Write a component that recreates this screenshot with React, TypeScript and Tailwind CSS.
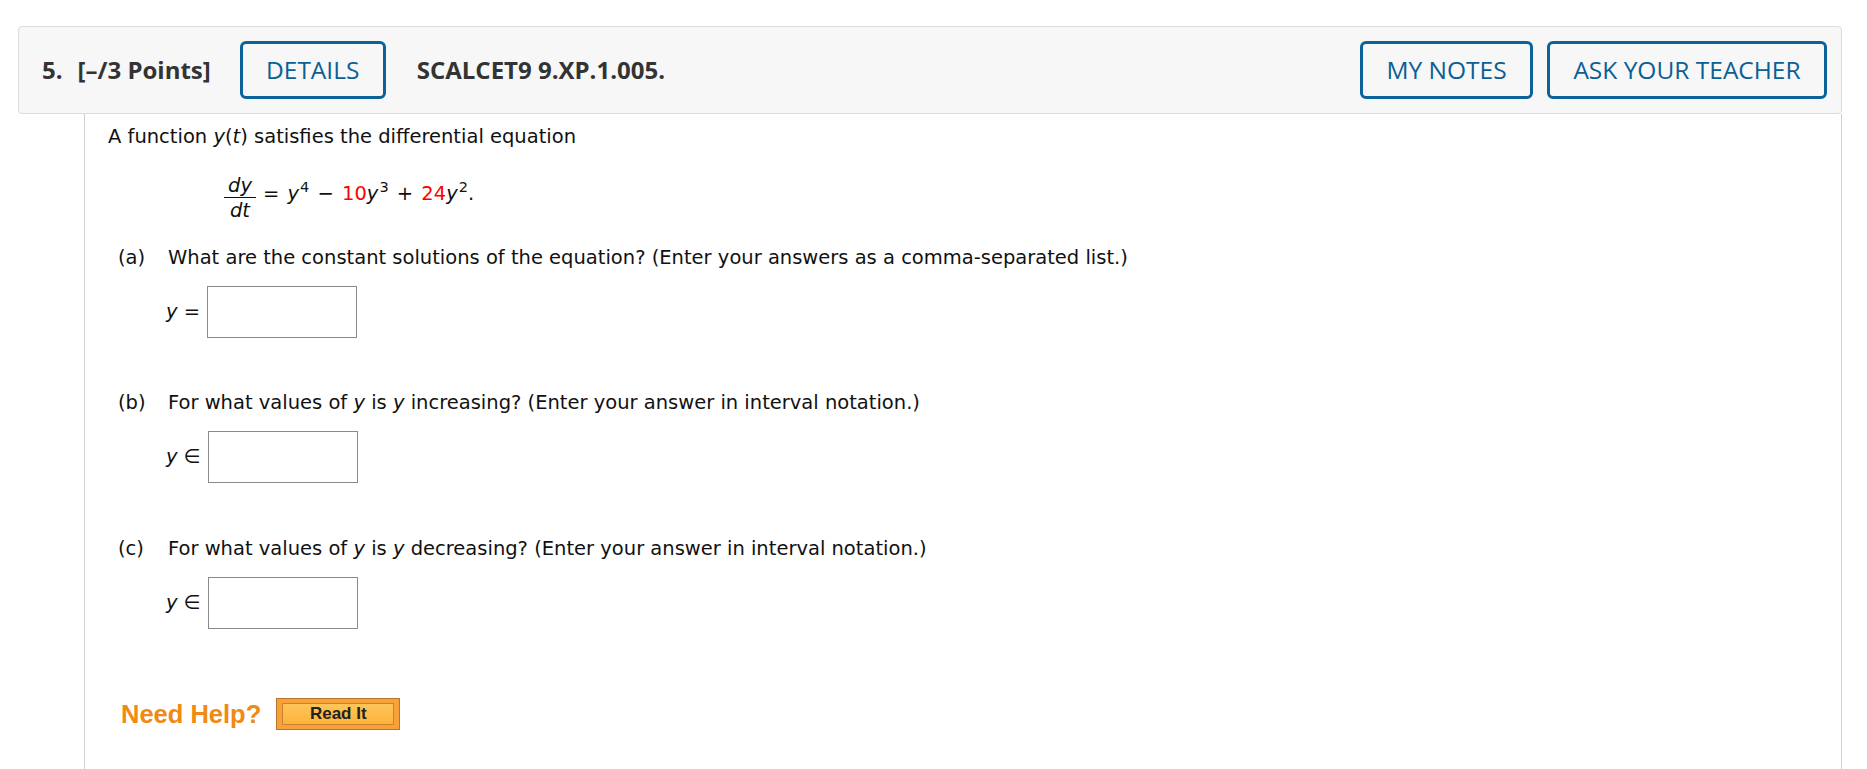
import React from "react";

function HeaderButton({ label, width }: { label: string; width: string }) {
  return (
    <button
      className={`${width} h-[58px] shrink-0 rounded-[6px] border-[3px] border-[#0b639a] bg-transparent text-[24.5px] text-[#0b5f94]`}
    >
      {label}
    </button>
  );
}

function Part({
  label,
  question,
  answerLabel,
}: {
  label: string;
  question: React.ReactNode;
  answerLabel: React.ReactNode;
}) {
  return (
    <div className="pl-[10px]">
      <div className="flex leading-[24px]">
        <span className="w-[50px] shrink-0">{label}</span>
        <span>{question}</span>
      </div>
      <div className="mt-[16px] ml-[48px] flex items-center">
        <span className="leading-[24px]">{answerLabel}</span>
        <input
          type="text"
          className="ml-[7px] h-[52px] w-[150px] border border-[#8a8a8a] bg-white outline-none"
        />
      </div>
    </div>
  );
}

export default function App() {
  const y = <i>y</i>;
  return (
    <div className="h-[769px] overflow-hidden bg-white pl-[18px] pr-[25px] pt-[26px]">
      <div className="flex h-[88px] items-center rounded-[4px] border border-[#dcdcdc] bg-[#f7f7f7] pl-[23px] pr-[14px] font-['Open_Sans',sans-serif]">
        <span className="text-[24px] font-bold text-[#333]">5.</span>
        <span className="ml-[15px] text-[24px] font-bold text-[#333]">[–/3 Points]</span>
        <div className="ml-[29px]">
          <HeaderButton label="DETAILS" width="w-[146px]" />
        </div>
        <span className="ml-[31px] text-[24px] font-bold text-[#333]">SCALCET9 9.XP.1.005.</span>
        <div className="flex-1" />
        <div className="flex gap-[14px]">
          <HeaderButton label="MY NOTES" width="w-[173px]" />
          <HeaderButton label="ASK YOUR TEACHER" width="w-[280px]" />
        </div>
      </div>

      <div className="ml-[66px] h-[660px] rounded-b-[4px] border-x border-b border-[#cfcfcf] pl-[23px] pt-[11px] font-['DejaVu_Sans',Verdana,sans-serif] text-[19.5px] text-[#111]">
        <p className="leading-[24px]">
          A function <i>y</i>(<i>t</i>) satisfies the differential equation
        </p>

        <div className="ml-[116px] mt-[27px] flex items-start">
          <div className="flex flex-col items-center">
            <span className="px-[4px] leading-[20px]">
              <i>dy</i>
            </span>
            <span className="mt-[1px] h-px w-full bg-[#111]" />
            <span className="px-[4px] pt-[3px] leading-[20px]">
              <i>dt</i>
            </span>
          </div>
          <span className="ml-[7px] mt-[6px] leading-[24px] [word-spacing:2px]">
            = {y}
            <sup className="-top-[8px] ml-[1px] text-[14.5px]">4</sup> − <span className="text-[#ff0000]">10</span>
            {y}
            <sup className="-top-[8px] ml-[1px] text-[14.5px]">3</sup> + <span className="text-[#ff0000]">24</span>
            {y}
            <sup className="-top-[8px] ml-[1px] text-[14.5px]">2</sup>.
          </span>
        </div>

        <div className="mt-[25px]">
          <Part
            label="(a)"
            question="What are the constant solutions of the equation? (Enter your answers as a comma-separated list.)"
            answerLabel={<>{y} =</>}
          />
        </div>

        <div className="mt-[53px]">
          <Part
            label="(b)"
            question={
              <>
                For what values of {y} is {y} increasing? (Enter your answer in interval notation.)
              </>
            }
            answerLabel={<>{y} ∈</>}
          />
        </div>

        <div className="mt-[54px]">
          <Part
            label="(c)"
            question={
              <>
                For what values of {y} is {y} decreasing? (Enter your answer in interval notation.)
              </>
            }
            answerLabel={<>{y} ∈</>}
          />
        </div>

        <div className="mt-[69px] flex items-center pl-[13px] font-['Liberation_Sans',Arial,sans-serif]">
          <span className="text-[25.5px] font-bold leading-[28px] text-[#f08a12]">Need Help?</span>
          <button className="ml-[15px] h-[32px] w-[124px] border border-[#b8742c] bg-[#f8a139] px-[5px] py-[4px]">
            <span className="flex h-full w-full items-center justify-center border border-[#c8832e] bg-gradient-to-b from-[#ffc55a] to-[#fdb33a] text-[17px] font-bold text-[#222]">
              Read It
            </span>
          </button>
        </div>
      </div>
    </div>
  );
}
